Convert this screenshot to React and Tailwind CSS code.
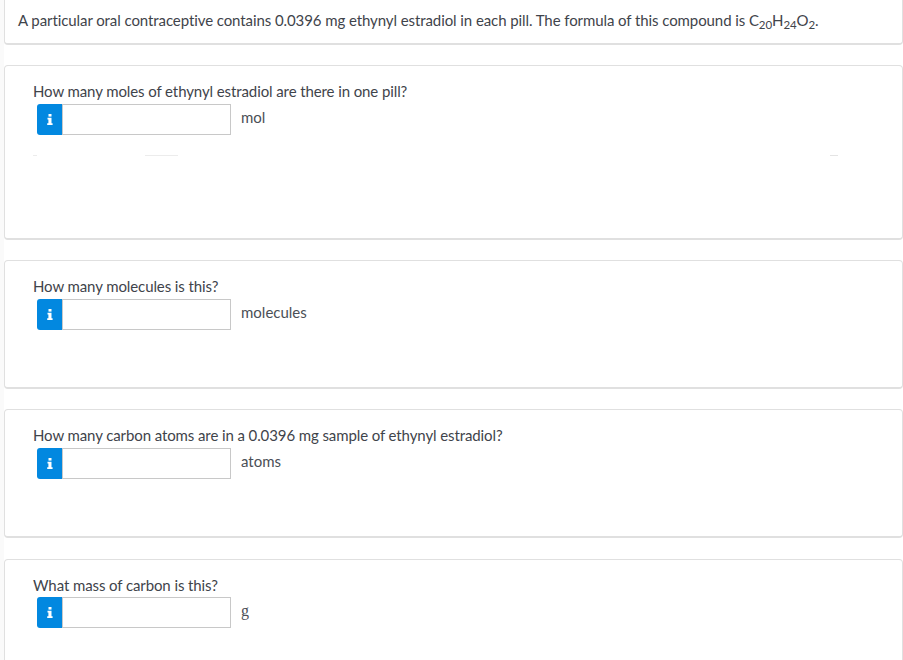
const font = { fontFamily: 'Lato, sans-serif' };

const questions = [
  { text: 'How many moles of ethynyl estradiol are there in one pill?', unit: 'mol', height: 'h-[175px]' },
  { text: 'How many molecules is this?', unit: 'molecules', height: 'h-[129px]' },
  { text: 'How many carbon atoms are in a 0.0396 mg sample of ethynyl estradiol?', unit: 'atoms', height: 'h-[129px]' },
  { text: 'What mass of carbon is this?', unit: 'g', height: 'h-[129px] mt-[1px]' },
];

const InfoIcon = () => (
  <svg width="6" height="11" viewBox="0 0 6 11" fill="#fff">
    <rect x="1.5" y="0" width="3" height="2.6" />
    <path d="M0.5 3.8H4.5V9.2H5.6V11H0.2V9.2H1.4V5.4H0.5Z" />
  </svg>
);

const AnswerRow = ({ unit }) => (
  <div className={`flex items-start ml-[4px] ${unit === 'g' ? 'mt-[2px]' : 'mt-[3px]'}`}>
    <div className="w-[25px] h-[31px] bg-[#0288e0] rounded-l-[3px] flex items-center justify-center pb-[1px]">
      <InfoIcon />
    </div>
    <div className="w-[169px] h-[31px] bg-white border border-[#c8c8c8]" />
    {unit === 'g' ? (
      <span className="ml-[10px] mt-[3px] text-[16px] leading-[22px] text-[#4b4f56] [font-family:'Liberation_Serif',serif]">g</span>
    ) : (
      <span className="ml-[10px] mt-[2px] text-[15px] leading-[22px] text-[#4b4f56]">{unit}</span>
    )}
  </div>
);

const QuestionCard = ({ text, unit, height }) => (
  <div className={`${height} bg-white border border-[#e0e0e0] border-b-2 rounded-[4px] pt-[15px] pl-[28px]`}>
    <p className="text-[15px] leading-[20px] tracking-[-0.1px] text-[#3f444b]">{text}</p>
    <AnswerRow unit={unit} />
    {unit === 'mol' && (
      <div className="flex mt-[20px]">
        <div className="w-[4px] h-px bg-[#ececec]" />
        <div className="w-[33px] h-px bg-[#ececec] ml-[108px]" />
        <div className="w-[8px] h-px bg-[#e4e4e4] ml-[652px]" />
      </div>
    )}
  </div>
);

export default function App() {
  return (
    <div className="h-[660px] w-[903px] overflow-hidden bg-[#fafafa]" style={font}>
      <div className="ml-[4px] w-[899px] h-full bg-white flex flex-col">
        <div className="h-[45px] shrink-0 border border-t-0 border-[#e0e0e0] border-b-2 rounded-b-[4px] pl-[13px] pt-[10px]">
          <p className="text-[15px] leading-[20px] tracking-[-0.085px] text-[#3f444b]">
            A particular oral contraceptive contains 0.0396 mg ethynyl estradiol in each pill. The formula of this compound is C<sub className="text-[11.5px] leading-none">20</sub>H<sub className="text-[11.5px] leading-none">24</sub>O<sub className="text-[11.5px] leading-none">2</sub>.
          </p>
        </div>
        <div className="flex flex-col gap-[20px] mt-[20px] shrink-0">
          {questions.map((q) => (
            <QuestionCard key={q.unit} {...q} />
          ))}
        </div>
      </div>
    </div>
  );
}
